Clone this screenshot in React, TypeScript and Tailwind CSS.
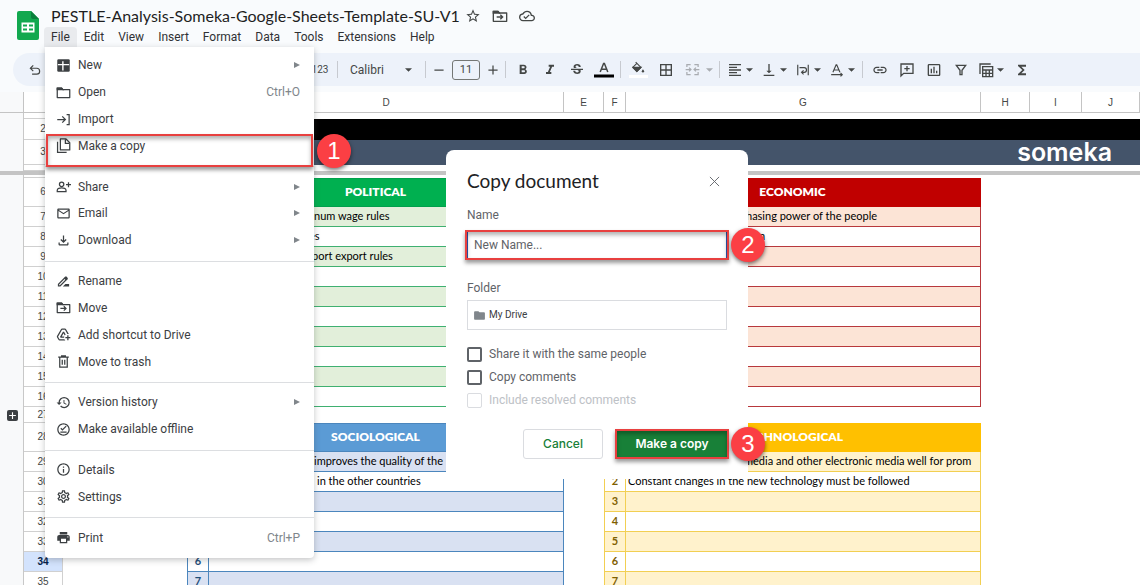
import React from 'react';
import {
  MdAddToDrive,
  MdBorderAll,
  MdDriveFileRenameOutline,
  MdFolder,
  MdFormatAlignLeft,
  MdFormatBold,
  MdFormatItalic,
  MdFunctions,
  MdHistory,
  MdInsertChartOutlined,
  MdLink,
  MdMailOutline,
  MdOutlineCloudDone,
  MdOutlineFileDownload,
  MdOutlineInfo,
  MdOutlineOfflinePin,
  MdOutlineSettings,
  MdPrint,
  MdStarBorder,
  MdStrikethroughS,
  MdVerticalAlignBottom,
} from 'react-icons/md';

type IconProps = { className?: string };

function Svg({ className, children }: { className?: string; children: React.ReactNode }) {
  return (
    <svg viewBox="0 0 24 24" className={className} fill="none" stroke="currentColor" strokeWidth={2} aria-hidden="true">
      {children}
    </svg>
  );
}

const SheetIcon = ({ className }: IconProps) => (
  <Svg className={className}>
    <rect x="2" y="2" width="20" height="20" rx="2" fill="currentColor" stroke="none" />
    <path d="M3 10.5h18M11 5v15" stroke="#fff" strokeWidth={2.2} />
  </Svg>
);
const FolderIcon = ({ className }: IconProps) => (
  <Svg className={className}>
    <path d="M2 5h7l2 2.5h11V20H2z" strokeLinejoin="round" />
    <path d="M2 5h7l2 2.5H2z" fill="currentColor" />
  </Svg>
);
const FolderMoveIcon = ({ className }: IconProps) => (
  <Svg className={className}>
    <path d="M2 5h7l2 2.5h11V20H2z" strokeLinejoin="round" />
    <path d="M2 5h7l2 2.5H2z" fill="currentColor" />
    <path d="M7 13.500h9M12.500 10l3.500 3.500-3.500 3.500" />
  </Svg>
);
const ImportIcon = ({ className }: IconProps) => (
  <Svg className={className}>
    <path d="M2 12h13M10 7l5 5-5 5M17 4h4v16h-4" />
  </Svg>
);
const CopyIcon = ({ className }: IconProps) => (
  <Svg className={className}>
    <path d="M7 1.500h9l6 6V19H7z" strokeLinejoin="round" />
    <path d="M15 2v6.500h6M2.500 6v17H17" />
  </Svg>
);
const PersonAddIcon = ({ className }: IconProps) => (
  <Svg className={className}>
    <circle cx="9" cy="8.500" r="3.500" />
    <path d="M2 20v-2c0-2.500 4-4 7-4s7 1.500 7 4v2zM20 5v8M16 9h8" />
  </Svg>
);
const TrashIcon = ({ className }: IconProps) => (
  <Svg className={className}>
    <path d="M3.500 5h17M9 4V3h6v1M6 5v16h12V5M10 9v8M14 9v8" />
  </Svg>
);
const UndoIcon = ({ className }: IconProps) => (
  <Svg className={className}>
    <path d="M9 4 4 9l5 5M4 9h11a5 5 0 0 1 0 10H7" />
  </Svg>
);
const CommentIcon = ({ className }: IconProps) => (
  <Svg className={className}>
    <path d="M3 3h18v14H7l-4 4zM12 6v8M8 10h8" />
  </Svg>
);
const FunnelIcon = ({ className }: IconProps) => (
  <Svg className={className}>
    <path d="M5 5h14l-5.500 7.500V19h-3v-6.500z" />
  </Svg>
);
const MergeIcon = ({ className }: IconProps) => (
  <Svg className={className}>
    <path d="M9 4H3v4M15 4h6v4M9 20H3v-4M15 20h6v-4M1 12h8M6.500 9l3 3-3 3M23 12h-8M17.500 9l-3 3 3 3" />
  </Svg>
);
const WrapIcon = ({ className }: IconProps) => (
  <Svg className={className}>
    <path d="M3 3v18M21 3v18M6 8h8a4 4 0 0 1 0 8h-4M13 12.500 9.500 16l3.500 3.500" />
  </Svg>
);
const RotateIcon = ({ className }: IconProps) => (
  <Svg className={className}>
    <path d="M5 16 10.500 3h1L17 16M7 12h8M2 20h19M18 17l3 3-3 3" />
  </Svg>
);
const TableIcon = ({ className }: IconProps) => (
  <Svg className={className}>
    <path d="M3 18V3h16M7 7h15v15H7zM7 12h15M7 17h15M12 12v10M17 12v10" />
  </Svg>
);
const FillIcon = ({ className }: IconProps) => (
  <Svg className={className}>
    <path d="M8 2l9 9-7 7-7-7 7-7" />
    <path d="M4 11h13l-7 7z" fill="currentColor" />
    <path d="M20.500 14s-2 2.300-2 3.500a2 2 0 0 0 4 0c0-1.200-2-3.500-2-3.500z" fill="currentColor" stroke="none" />
  </Svg>
);

function Caret({ className = '' }: IconProps) {
  return (
    <svg viewBox="0 0 8 4" className={`h-1 w-[7px] shrink-0 ${className}`} fill="currentColor" aria-hidden="true">
      <path d="M0 0h8L4 4z" />
    </svg>
  );
}

function Logo() {
  return (
    <svg viewBox="0 0 22 29" className="h-[29px] w-[22px] shrink-0" aria-hidden="true">
      <path d="M2 0h12l8 8v19a2 2 0 0 1-2 2H2a2 2 0 0 1-2-2V2a2 2 0 0 1 2-2z" fill="#12a84f" />
      <path d="M14 0l8 8h-6a2 2 0 0 1-2-2z" fill="#0a7f3c" />
      <rect x="4.500" y="11.500" width="13" height="10" fill="#fff" />
      <path d="M6 13.500h4v2H6zM12 13.500h4v2h-4zM6 17.500h4v2H6zM12 17.500h4v2h-4z" fill="#12a84f" />
    </svg>
  );
}

const menuNames = ['File', 'Edit', 'View', 'Insert', 'Format', 'Data', 'Tools', 'Extensions', 'Help'];

function Header() {
  return (
    <header className="flex h-[53px] shrink-0 pl-[17px] pt-[5px]">
      <div className="flex w-[27px] shrink-0 pt-[6px]">
        <Logo />
      </div>
      <div>
        <div className="flex h-[22px] items-center pl-[7px] text-[#444746]">
          <h1 className="w-[414px] whitespace-nowrap font-[Lato] text-[16px] text-[#1f1f1f]">
            PESTLE-Analysis-Someka-Google-Sheets-Template-SU-V1
          </h1>
          <div className="flex gap-[11px]">
            <button aria-label="Star"><MdStarBorder className="size-4" /></button>
            <button aria-label="Move"><FolderMoveIcon className="size-4" /></button>
            <button aria-label="Document status"><MdOutlineCloudDone className="size-4" /></button>
          </div>
        </div>
        <nav className="flex h-5 font-[Roboto] text-[12px] text-[#303134]">
          {menuNames.map((name, i) => (
            <button key={name} className={i === 0 ? 'rounded-t bg-[#e9ebee] px-[7px]' : 'px-[7px]'}>
              {name}
            </button>
          ))}
        </nav>
      </div>
    </header>
  );
}

function Divider() {
  return <span className="mx-[3px] h-[17px] w-px shrink-0 bg-[#c7cad0]" />;
}

function Tool({ label, children }: { label: string; children: React.ReactNode }) {
  return (
    <button aria-label={label} className="flex h-7 w-[27px] shrink-0 items-center justify-center">
      {children}
    </button>
  );
}

function DropTool({ label, muted, children }: { label: string; muted?: boolean; children: React.ReactNode }) {
  return (
    <button
      aria-label={label}
      className={`flex h-7 shrink-0 items-center ${muted ? 'w-[37px] gap-[6px] pl-[6px] text-[#a9acb1]' : 'w-[34px] gap-[3px] pl-1'}`}
    >
      {children}
      <Caret />
    </button>
  );
}

function Toolbar() {
  return (
    <div className="ml-[13px] flex h-[33px] shrink-0 items-center overflow-hidden rounded-l-full bg-[#edf2fa] text-[#444746]">
      <button aria-label="Undo" className="flex w-11 shrink-0 justify-center">
        <UndoIcon className="size-[14px]" />
      </button>
      <div className="w-[249px] shrink-0" />
      <button className="w-7 shrink-0 font-[Roboto] text-[10px]">123</button>
      <Divider />
      <button className="flex w-[81px] shrink-0 items-center justify-between pl-[9px] pr-[10px] font-[Roboto] text-[12px]">
        Calibri
        <Caret />
      </button>
      <Divider />
      <button aria-label="Decrease font size" className="flex w-5 shrink-0 justify-center">
        <Svg className="size-[10px]"><path d="M1 12h22" strokeWidth={3} /></Svg>
      </button>
      <input
        aria-label="Font size"
        defaultValue="11"
        className="mx-[3px] h-5 w-7 shrink-0 rounded-[3px] border border-[#747775] bg-transparent text-center font-[Roboto] text-[11px]"
      />
      <button aria-label="Increase font size" className="flex w-[19px] shrink-0 justify-center">
        <Svg className="size-[10px]"><path d="M1 12h22M12 1v22" strokeWidth={3} /></Svg>
      </button>
      <Divider />
      <Tool label="Bold"><MdFormatBold className="size-4" /></Tool>
      <Tool label="Italic"><MdFormatItalic className="size-4" /></Tool>
      <Tool label="Strikethrough"><MdStrikethroughS className="size-4" /></Tool>
      <Tool label="Text colour">
        <svg viewBox="0 0 20 16" className="h-4 w-5" aria-hidden="true">
          <path d="M6.200 10 9.600 1.500h.8L13.800 10M7.500 7.200h5" fill="none" stroke="#444746" strokeWidth={1.5} />
          <path d="M0 12.500h20v3H0z" fill="#000" />
        </svg>
      </Tool>
      <Divider />
      <button aria-label="Fill colour" className="flex w-7 shrink-0 flex-col items-center">
        <FillIcon className="size-[14px]" />
        <span className="h-[3px] w-[19px] bg-white" />
      </button>
      <Tool label="Borders"><MdBorderAll className="size-4" /></Tool>
      <DropTool label="Merge cells" muted><MergeIcon className="size-[15px]" /></DropTool>
      <Divider />
      <DropTool label="Horizontal align"><MdFormatAlignLeft className="size-4" /></DropTool>
      <DropTool label="Vertical align"><MdVerticalAlignBottom className="size-4" /></DropTool>
      <DropTool label="Text wrapping"><WrapIcon className="size-4 p-px" /></DropTool>
      <DropTool label="Text rotation"><RotateIcon className="size-4 p-px" /></DropTool>
      <Divider />
      <Tool label="Insert link"><MdLink className="size-4" /></Tool>
      <Tool label="Insert comment"><CommentIcon className="size-4" /></Tool>
      <Tool label="Insert chart"><MdInsertChartOutlined className="size-4" /></Tool>
      <Tool label="Create a filter"><FunnelIcon className="size-4" /></Tool>
      <DropTool label="Table views"><TableIcon className="size-4" /></DropTool>
      <Tool label="Functions"><MdFunctions className="size-4" /></Tool>
    </div>
  );
}

type Theme = { head: string; line: string; alt: string; num: string };

const green: Theme = { head: 'bg-[#00b050] border-[#00a04c]', line: 'border-[#3fb070]', alt: 'bg-[#e2efda]', num: 'text-[#375623]' };
const red: Theme = { head: 'bg-[#c00000] border-[#c00000]', line: 'border-[#b8383c]', alt: 'bg-[#fce4d6]', num: 'text-[#7b1f1f]' };
const blue: Theme = { head: 'bg-[#5b9bd5] border-[#4b86bd]', line: 'border-[#4b86bd]', alt: 'bg-[#d9e1f2]', num: 'text-[#1f4e79]' };
const yellow: Theme = { head: 'bg-[#ffc000] border-[#ffc000]', line: 'border-[#f2cf52]', alt: 'bg-[#fff2cc]', num: 'text-[#7f6000]' };

type Entry = { text: string; lead: number };

const political: Entry[] = [
  { text: 'num wage rules', lead: 105 },
  { text: 'es', lead: 100 },
  { text: 'port export rules', lead: 103 },
];
const economic: Entry[] = [
  { text: 'hasing power of the people', lead: 120 },
  { text: 'n', lead: 133 },
];
const sociological: Entry[] = [
  { text: 'improves the quality of the', lead: 105 },
  { text: 'in the other countries', lead: 108 },
];
const technological: Entry[] = [
  { text: 'media and other electronic media well for prom', lead: 118 },
  { text: 'Constant changes in the new technology must be followed', lead: 2 },
];

function Gutter({ label, marker, selected }: { label?: string; marker?: boolean; selected?: boolean }) {
  return (
    <>
      <td className="border-r border-[#c8c8c8] bg-[#f8f9fa] p-0 align-middle">
        {marker && (
          <button aria-label="Expand rows" className="ml-[7px] flex size-[11px] items-center justify-center rounded-[2px] bg-[#3c4043] text-white">
            <Svg className="size-[9px]"><path d="M3 12h18M12 3v18" strokeWidth={3} /></Svg>
          </button>
        )}
      </td>
      <th
        className={`overflow-hidden border-b border-r border-[#d0d0d0] p-0 text-center font-['Liberation_Sans'] text-[10px] leading-3 ${
          selected ? 'bg-[#d3e3fd] font-bold text-[#041e49]' : 'bg-white font-normal text-[#444746]'
        }`}
      >
        {label}
      </th>
    </>
  );
}

function SectionRow({ index, theme, entry }: { index: number; theme: Theme; entry?: Entry }) {
  const fill = index % 2 === 0 ? theme.alt : 'bg-white';
  return (
    <>
      <td className={`border-x border-b p-0 pb-[2px] text-center text-[11px] font-bold leading-4 ${theme.line} ${fill} ${theme.num}`}>
        {index + 1}
      </td>
      <td className={`overflow-hidden whitespace-nowrap border-b border-r p-0 pb-[2px] text-[11px] leading-4 text-black ${theme.line} ${fill}`}>
        {entry && <span style={{ marginLeft: entry.lead }}>{entry.text}</span>}
      </td>
    </>
  );
}

type SectionProps = { theme: Theme; title: string; entries: Entry[] };

function SectionHead({ theme, title }: SectionProps) {
  return (
    <th colSpan={2} className={`border p-0 pb-[2px] text-center text-[12px] font-extrabold leading-4 text-white ${theme.head}`}>
      {title}
    </th>
  );
}

function Block({ labels, count, left, right }: { labels: string[]; count: number; left: SectionProps; right: SectionProps }) {
  return (
    <>
      <tr className="h-[29px]">
        <Gutter label={labels[0]} />
        <td />
        <SectionHead {...left} />
        <td />
        <SectionHead {...right} />
        <td colSpan={3} />
      </tr>
      {Array.from({ length: count }, (_, i) => (
        <tr key={i} className="h-5">
          <Gutter label={labels[i + 1]} selected={labels[i + 1] === '34'} />
          <td />
          <SectionRow index={i} theme={left.theme} entry={left.entries[i]} />
          <td />
          <SectionRow index={i} theme={right.theme} entry={right.entries[i]} />
          <td colSpan={3} />
        </tr>
      ))}
    </>
  );
}

const columns = ['', '', '', '', 'D', 'E', 'F', 'G', 'H', 'I', 'J'];

function Sheet() {
  return (
    <div className="mt-[6px] min-h-0 flex-1 overflow-hidden bg-white">
      <table className="w-full table-fixed border-separate border-spacing-0 font-[Lato]">
        <colgroup>
          <col className="w-6" />
          <col className="w-[39px]" />
          <col className="w-[124px]" />
          <col className="w-[22px]" />
          <col className="w-[355px]" />
          <col className="w-10" />
          <col className="w-[22px]" />
          <col className="w-[355px]" />
          <col className="w-[49px]" />
          <col className="w-[52px]" />
          <col />
        </colgroup>
        <thead>
          <tr className="h-[21px]">
            {columns.map((name, i) => (
              <th
                key={i}
                className={`border-b border-r border-[#c4c4c4] p-0 pt-[2px] text-center font-['Liberation_Sans'] text-[10px] font-normal leading-3 text-[#444746] ${
                  i === 0 ? 'bg-[#f8f9fa]' : 'bg-white'
                }`}
              >
                {name}
              </th>
            ))}
          </tr>
        </thead>
        <tbody>
          <tr className="h-[6px]"><Gutter /><td colSpan={9} /></tr>
          <tr className="h-[21px]"><Gutter label="2" /><td colSpan={9} className="bg-black" /></tr>
          <tr className="h-[25px]">
            <Gutter label="3" />
            <td colSpan={9} className="bg-[#44546a] p-0 pb-px pr-7 text-right font-[Inter] text-[25px] font-semibold leading-5 text-white">
              someka
            </td>
          </tr>
          <tr className="h-[6px]"><Gutter /><td colSpan={9} /></tr>
          <tr className="h-1"><td colSpan={11} className="bg-[#c4c4c4] p-0" /></tr>
          <tr className="h-[3px]"><Gutter /><td colSpan={9} /></tr>
          <Block
            labels={['6', '7', '8', '9', '10', '11', '12', '13', '14', '15', '16']}
            count={10}
            left={{ theme: green, title: 'POLITICAL', entries: political }}
            right={{ theme: red, title: 'ECONOMIC', entries: economic }}
          />
          <tr className="h-4"><Gutter label="27" marker /><td colSpan={9} /></tr>
          <Block
            labels={['28', '29', '30', '31', '32', '33', '34', '35']}
            count={7}
            left={{ theme: blue, title: 'SOCIOLOGICAL', entries: sociological }}
            right={{ theme: yellow, title: 'TECHNOLOGICAL', entries: technological }}
          />
        </tbody>
      </table>
    </div>
  );
}

type Item = { label: string; icon: (p: IconProps) => React.ReactNode; hint?: string; sub?: boolean };

const groups: Item[][] = [
  [
    { label: 'New', icon: SheetIcon, sub: true },
    { label: 'Open', icon: FolderIcon, hint: 'Ctrl+O' },
    { label: 'Import', icon: ImportIcon },
    { label: 'Make a copy', icon: CopyIcon },
  ],
  [
    { label: 'Share', icon: PersonAddIcon, sub: true },
    { label: 'Email', icon: MdMailOutline, sub: true },
    { label: 'Download', icon: MdOutlineFileDownload, sub: true },
  ],
  [
    { label: 'Rename', icon: MdDriveFileRenameOutline },
    { label: 'Move', icon: FolderMoveIcon },
    { label: 'Add shortcut to Drive', icon: MdAddToDrive },
    { label: 'Move to trash', icon: TrashIcon },
  ],
  [
    { label: 'Version history', icon: MdHistory, sub: true },
    { label: 'Make available offline', icon: MdOutlineOfflinePin },
  ],
  [
    { label: 'Details', icon: MdOutlineInfo },
    { label: 'Settings', icon: MdOutlineSettings },
  ],
  [{ label: 'Print', icon: MdPrint, hint: 'Ctrl+P' }],
];

function Highlight({ className = '' }: { className?: string }) {
  return (
    <span
      className={`pointer-events-none absolute border-2 border-[#e8403f] shadow-[0_3px_4px_rgba(0,0,0,0.4),inset_0_3px_4px_rgba(0,0,0,0.3)] ${className}`}
    />
  );
}

function Badge({ n, className }: { n: number; className: string }) {
  return (
    <span
      className={`absolute flex size-[34px] items-center justify-center rounded-full bg-[#fb3f44] font-['Liberation_Sans'] text-[24px] leading-none text-white shadow-[0_2px_4px_rgba(0,0,0,0.55)] ${className}`}
    >
      {n}
    </span>
  );
}

function FileMenu() {
  return (
    <div
      role="menu"
      className="absolute left-[45px] top-[47px] flex h-[511px] w-[269px] flex-col rounded-b bg-white pb-[7px] pt-[5px] font-[Roboto] text-[12px] text-[#3c4043] shadow-[0_2px_6px_rgba(60,64,67,0.3)]"
    >
      {groups.map((group, g) => (
        <React.Fragment key={g}>
          {g > 0 && <hr className="mb-[6px] mt-[7px] border-t border-[#dcdee1]" />}
          {group.map(({ label, icon: Icon, hint, sub }) => (
            <button
              key={label}
              role="menuitem"
              className="relative flex flex-1 items-center gap-[7px] pl-[11px] pr-[14px] text-left leading-4"
            >
              <Icon className="size-[15px] shrink-0" />
              <span className="flex-1">{label}</span>
              {hint && <span className="text-[#80868b]">{hint}</span>}
              {sub && (
                <svg viewBox="0 0 6 6" className="size-[6px]" fill="#80868b" aria-hidden="true">
                  <path d="M0 0l6 3-6 3z" />
                </svg>
              )}
              {label === 'Make a copy' && <Highlight className="inset-x-px -bottom-2 top-[2px]" />}
            </button>
          ))}
        </React.Fragment>
      ))}
      <Badge n={1} className="left-[272px] top-[87px]" />
    </div>
  );
}

function CheckRow({ label, disabled }: { label: string; disabled?: boolean }) {
  return (
    <label className={`flex h-5 items-center gap-[7px] ${disabled ? 'text-[#bdc1c6]' : 'text-[#5f6368]'}`}>
      <input
        type="checkbox"
        disabled={disabled}
        className={`size-[15px] appearance-none rounded-[2px] ${disabled ? 'border border-[#dadce0]' : 'border-2 border-[#5f6368]'}`}
      />
      {label}
    </label>
  );
}

function CopyDialog() {
  return (
    <div
      role="dialog"
      aria-labelledby="copy-title"
      className="absolute left-[446px] top-[150px] w-[302px] rounded-t-lg bg-white px-[21px] pb-5 pt-[19px] font-[Roboto] text-[12px] leading-4 text-[#5f6368]"
    >
      <div className="flex h-6 items-center justify-between pr-[7px]">
        <h2 id="copy-title" className="font-[Lato] text-[19px] text-[#202124]">Copy document</h2>
        <button aria-label="Close">
          <Svg className="size-[11px]"><path d="M2 2l20 20M22 2 2 22" /></Svg>
        </button>
      </div>
      <label htmlFor="copy-name" className="mt-[14px] block">Name</label>
      <div className="relative mt-[9px] h-[26px]">
        <input
          id="copy-name"
          defaultValue="New Name..."
          className="h-full w-full border-x border-[#2a56b0] bg-white px-[6px] text-[#5f6368] outline-none"
        />
        <Highlight className="-inset-[2px]" />
        <Badge n={2} className="-right-[38px] -top-1" />
      </div>
      <p className="mt-[22px]">Folder</p>
      <button className="mt-[4px] flex h-[30px] w-full items-center gap-[3px] border border-[#dadce0] px-[5px] text-[10px] text-[#3c4043]">
        <MdFolder className="size-[13px] text-[#80868b]" />
        My Drive
      </button>
      <div className="mt-[14px] flex flex-col gap-[3px]">
        <CheckRow label="Share it with the same people" />
        <CheckRow label="Copy comments" />
        <CheckRow label="Include resolved comments" disabled />
      </div>
      <div className="mt-[19px] flex justify-end gap-[14px] font-[Inter] text-[12px]">
        <button className="h-[30px] w-20 rounded-[3px] border border-[#dadce0] font-medium text-[#188038]">Cancel</button>
        <div className="relative h-[30px] w-[110px]">
          <button className="h-full w-full bg-[#188038] font-semibold text-white">Make a copy</button>
          <Highlight className="-inset-x-[2px] inset-y-0" />
          <Badge n={3} className="-right-[38px] -top-[2px]" />
        </div>
      </div>
    </div>
  );
}

export default function App() {
  return (
    <main className="relative flex h-screen flex-col overflow-hidden bg-[#f9fbfd] font-[Inter]">
      <Header />
      <Toolbar />
      <Sheet />
      <FileMenu />
      <CopyDialog />
    </main>
  );
}
